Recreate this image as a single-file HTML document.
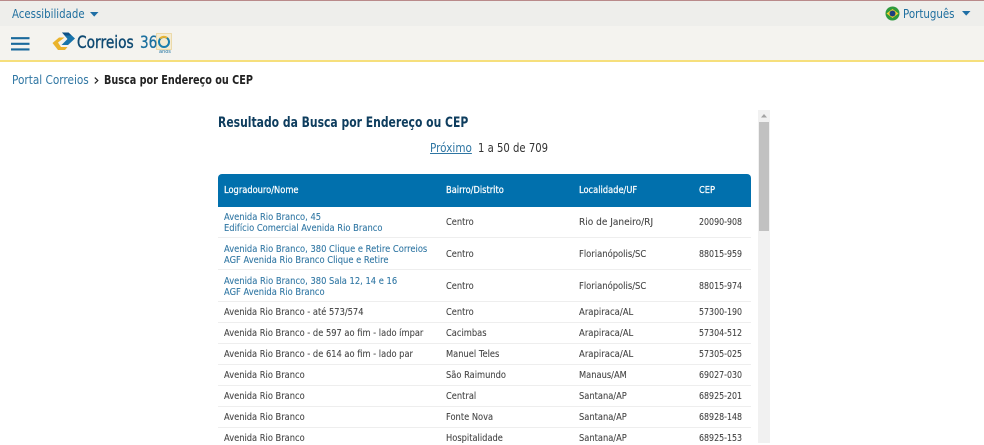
<!DOCTYPE html>
<html lang="pt-BR"><head><meta charset="utf-8"><title>Busca por Endereço ou CEP</title>
<style>
html,body{margin:0;padding:0;background:#fff}
body{width:984px;height:443px;overflow:hidden;position:relative;font-family:"DejaVu Sans","Liberation Sans",sans-serif;color:#3a3a3a}
.a{position:absolute;white-space:nowrap;transform-origin:0 50%;line-height:12px;filter:blur(.25px)}
.t{font-size:10px;transform:scaleX(.83);color:#444;margin-top:1px;-webkit-text-stroke:.1px #444}
.l{color:#2f76a3;-webkit-text-stroke:.1px #2f76a3;transform:scaleX(.835)}
.w{-webkit-text-stroke:.25px #fff}
.c{transform:scaleX(.79)}
.b{position:absolute}
.ln{position:absolute;left:218px;width:533px;height:1px;background:#eeeeee}
</style></head><body>
<div class="b" style="left:0;top:0;width:984px;height:1px;background:#b98a8a"></div>
<div class="b" style="left:0;top:1px;width:984px;height:25px;background:#eeeeeb"></div>
<div class="b" style="left:0;top:26px;width:984px;height:34px;background:#f4f3ef"></div>
<div class="b" style="left:0;top:60px;width:984px;height:2px;background:#f6df7c"></div>

<div class="a" style="left:12px;top:7px;font-size:12px;line-height:14px;color:#1f6f9f;transform:scaleX(.85)">Acessibilidade</div>
<svg class="b" style="left:90px;top:12px" width="9" height="5"><path d="M0 0H8.5L4.2 4.6Z" fill="#1f6fa5"/></svg>

<svg class="b" style="left:885px;top:6px" width="15" height="15" viewBox="0 0 15 15"><circle cx="7.5" cy="7.5" r="7" fill="#2e9a3c"/><path d="M1.5 7.5L7.5 3l6 4.5-6 4.5z" fill="#f2cf2e"/><circle cx="7.5" cy="7.5" r="3" fill="#1d3f7e"/></svg>
<div class="a" style="left:903px;top:7px;font-size:12px;line-height:14px;color:#1f6f9f;transform:scaleX(.855)">Português</div>
<svg class="b" style="left:962px;top:11px" width="9" height="5"><path d="M0 0H8.5L4.2 4.6Z" fill="#1f6fa5"/></svg>

<svg class="b" style="left:11px;top:37px" width="19" height="14"><path d="M0 1.2H18.5M0 6.8H18.5M0 12.4H18.5" stroke="#1a6a9c" stroke-width="2.1"/></svg>

<svg class="b" style="left:52px;top:31px" width="24" height="20" viewBox="0 0 24 20">
<path d="M10 1.5H16.5L23 7.5 16 14H9.5L15.5 8Z" fill="#1874ab"/>
<path d="M10 1.5H16.5L19.5 4.5H13Z" fill="#0d4f86"/>
<path d="M7 6.5H12.5L6 11.5 9 16H15.5L13 19H6L0.5 12Z" fill="#eab32b"/>
</svg>
<div class="a" style="left:77px;top:34px;font-size:17px;line-height:19px;color:#0f4a72;transform:scaleX(.81);-webkit-text-stroke:.4px #0f4a72">Correios</div>
<svg class="b" style="left:156px;top:33px" width="16" height="22" viewBox="0 0 16 22">
<rect x=".5" y=".5" width="15" height="16" fill="#f5ecd2" stroke="#e3c474" stroke-dasharray="1 1"/>
<circle cx="8" cy="9" r="5" fill="none" stroke="#1a7fae" stroke-width="2"/>
<path d="M4 5.5A5 5 0 0 1 11 5" fill="none" stroke="#e9b32f" stroke-width="2"/>
</svg>
<div class="a" style="left:140px;top:34px;font-size:17px;line-height:19px;color:#1a6f9e;transform:scaleX(.8);-webkit-text-stroke:.3px #1a6f9e">36</div>
<div class="a" style="left:159px;top:49px;font-size:5px;line-height:6px;color:#1a6f9e">anos</div>

<div class="a" style="left:12px;top:73px;font-size:12px;line-height:14px;color:#2f76a3;transform:scaleX(.875)">Portal Correios</div>
<svg class="b" style="left:94px;top:77px" width="5" height="7"><path d="M.8.6L3.8 3.5.8 6.4" fill="none" stroke="#222" stroke-width="1.2"/></svg>
<div class="a" style="left:104px;top:73px;font-size:12px;line-height:14px;color:#222;font-weight:700;transform:scaleX(.805)">Busca por Endereço ou CEP</div>

<div class="a" style="left:218px;top:115px;font-size:14px;line-height:16px;color:#0e3d5e;font-weight:700;transform:scaleX(.772)">Resultado da Busca por Endereço ou CEP</div>
<div class="a" style="left:430px;top:141px;font-size:12px;line-height:14px;color:#2f76a3;text-decoration:underline;transform:scaleX(.87)">Próximo</div>
<div class="a" style="left:478px;top:141px;font-size:12px;line-height:14px;color:#333;transform:scaleX(.84)">1 a 50 de 709</div>

<div class="b" style="left:218px;top:174px;width:533px;height:33px;background:#0170ad;border-radius:4px 4px 0 0"></div>
<div class="a t w" style="left:224px;top:184px;color:#fff">Logradouro/Nome</div>
<div class="a t w" style="left:446px;top:184px;color:#fff">Bairro/Distrito</div>
<div class="a t w" style="left:579px;top:184px;color:#fff">Localidade/UF</div>
<div class="a t w" style="left:699px;top:184px;color:#fff">CEP</div>

<div class="a t l" style="left:224px;top:211px">Avenida Rio Branco, 45</div>
<div class="a t l" style="left:224px;top:222px">Edifício Comercial Avenida Rio Branco</div>
<div class="a t" style="left:446px;top:216px">Centro</div><div class="a t" style="left:579px;top:216px;transform:scaleX(.9)">Rio de Janeiro/RJ</div><div class="a t c" style="left:699px;top:216px">20090-908</div>
<div class="ln" style="top:237px"></div>

<div class="a t l" style="left:224px;top:243px">Avenida Rio Branco, 380 Clique e Retire Correios</div>
<div class="a t l" style="left:224px;top:254px">AGF Avenida Rio Branco Clique e Retire</div>
<div class="a t" style="left:446px;top:248px">Centro</div><div class="a t" style="left:579px;top:248px;transform:scaleX(.84)">Florianópolis/SC</div><div class="a t c" style="left:699px;top:248px">88015-959</div>
<div class="ln" style="top:269px"></div>

<div class="a t l" style="left:224px;top:275px">Avenida Rio Branco, 380 Sala 12, 14 e 16</div>
<div class="a t l" style="left:224px;top:286px">AGF Avenida Rio Branco</div>
<div class="a t" style="left:446px;top:280px">Centro</div><div class="a t" style="left:579px;top:280px;transform:scaleX(.84)">Florianópolis/SC</div><div class="a t c" style="left:699px;top:280px">88015-974</div>
<div class="ln" style="top:301px"></div>

<div class="a t" style="left:224px;top:306px">Avenida Rio Branco - até 573/574</div>
<div class="a t" style="left:446px;top:306px">Centro</div><div class="a t" style="left:579px;top:306px;transform:scaleX(.85)">Arapiraca/AL</div><div class="a t c" style="left:699px;top:306px">57300-190</div>
<div class="ln" style="top:322px"></div>

<div class="a t" style="left:224px;top:327px">Avenida Rio Branco - de 597 ao fim - lado ímpar</div>
<div class="a t" style="left:446px;top:327px">Cacimbas</div><div class="a t" style="left:579px;top:327px;transform:scaleX(.85)">Arapiraca/AL</div><div class="a t c" style="left:699px;top:327px">57304-512</div>
<div class="ln" style="top:343px"></div>

<div class="a t" style="left:224px;top:348px">Avenida Rio Branco - de 614 ao fim - lado par</div>
<div class="a t" style="left:446px;top:348px">Manuel Teles</div><div class="a t" style="left:579px;top:348px;transform:scaleX(.85)">Arapiraca/AL</div><div class="a t c" style="left:699px;top:348px">57305-025</div>
<div class="ln" style="top:364px"></div>

<div class="a t" style="left:224px;top:369px">Avenida Rio Branco</div>
<div class="a t" style="left:446px;top:369px">São Raimundo</div><div class="a t" style="left:579px;top:369px">Manaus/AM</div><div class="a t c" style="left:699px;top:369px">69027-030</div>
<div class="ln" style="top:385px"></div>

<div class="a t" style="left:224px;top:390px">Avenida Rio Branco</div>
<div class="a t" style="left:446px;top:390px">Central</div><div class="a t" style="left:579px;top:390px">Santana/AP</div><div class="a t c" style="left:699px;top:390px">68925-201</div>
<div class="ln" style="top:406px"></div>

<div class="a t" style="left:224px;top:411px">Avenida Rio Branco</div>
<div class="a t" style="left:446px;top:411px">Fonte Nova</div><div class="a t" style="left:579px;top:411px">Santana/AP</div><div class="a t c" style="left:699px;top:411px">68928-148</div>
<div class="ln" style="top:427px"></div>

<div class="a t" style="left:224px;top:432px">Avenida Rio Branco</div>
<div class="a t" style="left:446px;top:432px">Hospitalidade</div><div class="a t" style="left:579px;top:432px">Santana/AP</div><div class="a t c" style="left:699px;top:432px">68925-153</div>

<div class="b" style="left:758px;top:110px;width:12px;height:333px;background:#f1f1f1"></div>
<svg class="b" style="left:761px;top:114px" width="6" height="4"><path d="M0 3.5L3 0 6 3.5Z" fill="#a3a3a3"/></svg>
<div class="b" style="left:759px;top:122px;width:10px;height:109px;background:#c1c1c1"></div>
</body></html>
